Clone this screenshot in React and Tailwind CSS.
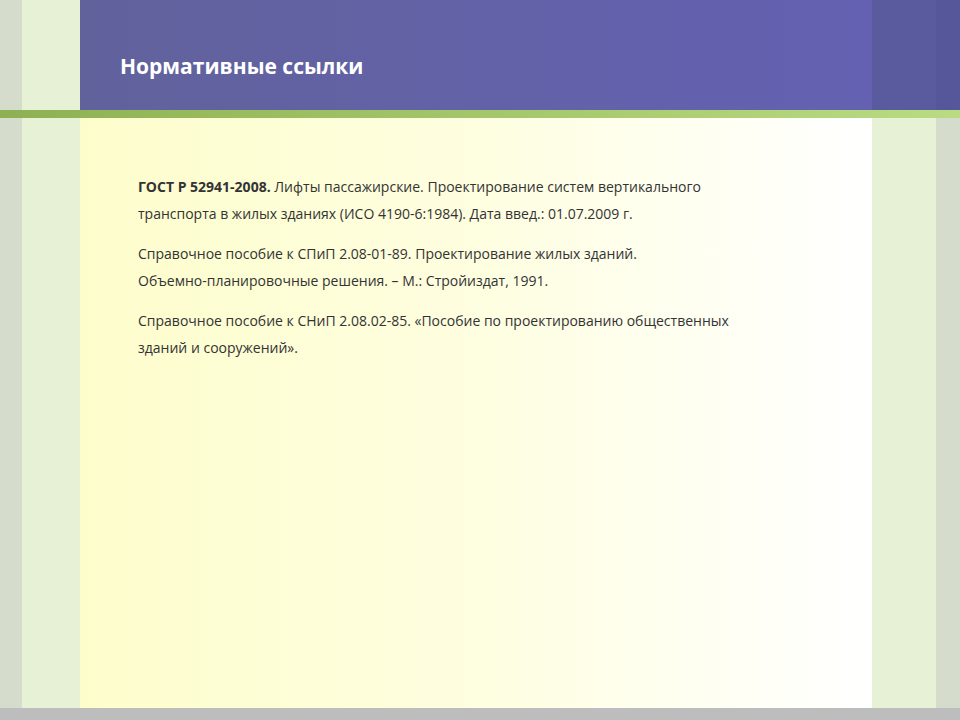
export default function App() {
  return (
    <div className="w-[960px] h-[720px] flex flex-col overflow-hidden" style={{ fontFamily: '"Open Sans", "Noto Sans", sans-serif' }}>
      <div className="flex h-[110px]">
        <div className="w-[22px] bg-[#d6dccb]" />
        <div className="w-[58px] bg-[#e6f1d6]" />
        <div className="w-[792px] bg-gradient-to-r from-[#61629c] to-[#6461b2] flex items-center pl-[40px] pt-[24px]">
          <h1 className="text-white font-bold text-[21px]">Нормативные ссылки</h1>
        </div>
        <div className="w-[64px] bg-[#5a5b9e]" />
        <div className="w-[24px] bg-[#55579a]" />
      </div>
      <div className="h-[8px] bg-gradient-to-r from-[#8db152] to-[#b9dc82]" />
      <div className="flex flex-1">
        <div className="w-[22px] bg-[#d6dccb]" />
        <div className="w-[58px] bg-[#e6f1d6]" />
        <div className="w-[792px] bg-gradient-to-r from-[#fdfdcc] via-[#fefee0] to-[#ffffff] pl-[58px] pr-[20px] pt-[55px] text-[14px] leading-[27px] text-[#333333] whitespace-nowrap">
          <p className="mb-[13px]"><b>ГОСТ Р 52941-2008.</b> Лифты пассажирские. Проектирование систем вертикального<br />транспорта в жилых зданиях (ИСО 4190-6:1984). Дата введ.: 01.07.2009 г.</p>
          <p className="mb-[13px]">Справочное пособие к СПиП 2.08-01-89. Проектирование жилых зданий.<br />Объемно-планировочные решения. – М.: Стройиздат, 1991.</p>
          <p>Справочное пособие к СНиП 2.08.02-85. «Пособие по проектированию общественных<br />зданий и сооружений».</p>
        </div>
        <div className="w-[64px] bg-[#e6f1d6]" />
        <div className="w-[24px] bg-[#d6dccb]" />
      </div>
      <div className="h-[12px] bg-[#bdbdbd]" />
    </div>
  );
}
